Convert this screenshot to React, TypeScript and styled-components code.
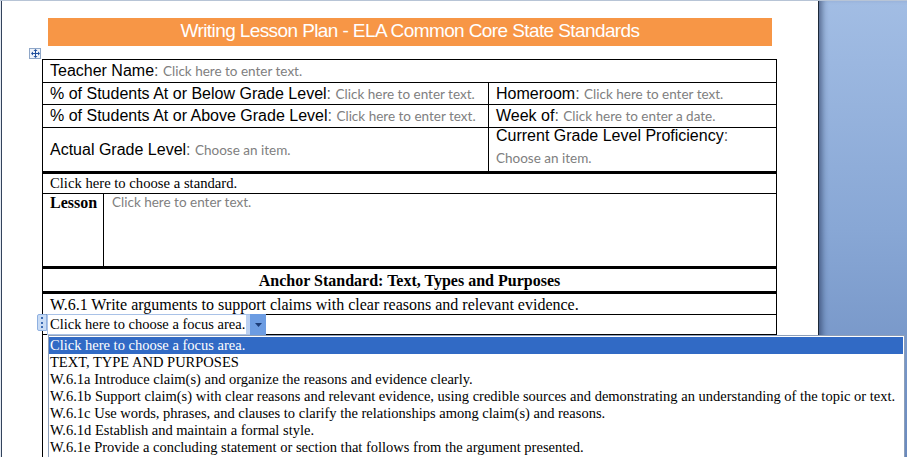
import React from "react";
import styled, { createGlobalStyle } from "styled-components";

const GlobalStyle = createGlobalStyle`
  * { box-sizing: border-box; }
  html, body { margin: 0; padding: 0; background: #fff; overflow: hidden; }
`;

const SANS = `"Liberation Sans", Arial, sans-serif`;
const SERIF = `"Liberation Serif", "Times New Roman", serif`;
const HINT = `Lato, "Noto Sans", sans-serif`;

const Window = styled.div`
  position: relative;
  display: flex;
  width: 907px;
  height: 457px;
  overflow: hidden;
  padding-left: 1px;
  border-top: 1px solid #b7c4d6;
  background: #e4eaf2;
`;

const Page = styled.div`
  width: 818px;
  flex: none;
  padding-top: 17px;
  background: #fff;
  border-left: 1px solid #33435c;
  border-right: 1px solid #1c2838;
`;

const Gutter = styled.div`
  flex: 1;
  background: linear-gradient(180deg, #a2bde4 0%, #88a7d5 50%, #6a8abe 100%);
  box-shadow: inset 7px 0 6px -4px rgba(20, 35, 70, 0.55);
`;

const Banner = styled.div`
  width: 724px;
  height: 28px;
  margin-left: 46px;
  padding-bottom: 2px;
  background: #f79646;
  color: #fff;
  font: 19px ${SANS};
  letter-spacing: -0.6px;
  line-height: 26px;
  text-align: center;
`;

const HandleRow = styled.div`
  height: 13px;
  padding: 2px 0 0 27px;
`;

const MoveHandle = styled.div`
  width: 12px;
  height: 11px;
  display: flex;
  align-items: center;
  justify-content: center;
  border: 1px solid #8fa7c8;
  background: #eef3fa;
`;

const Table = styled.div`
  width: 735px;
  margin-left: 40px;
  border: 1px solid #000;
  border-bottom: none;
`;

const Row = styled.div<{ $h: number; $rule?: number }>`
  display: flex;
  height: ${(p) => p.$h}px;
  border-bottom: ${(p) => p.$rule ?? 1}px solid #000;
`;

const Cell = styled.div<{
  $w?: number;
  $pad?: number;
  $align?: string;
  $justify?: string;
  $divider?: boolean;
}>`
  position: relative;
  display: flex;
  flex: ${(p) => (p.$w ? "none" : "1")};
  width: ${(p) => (p.$w ? `${p.$w}px` : "auto")};
  align-items: ${(p) => p.$align ?? "center"};
  justify-content: ${(p) => p.$justify ?? "flex-start"};
  padding-left: ${(p) => p.$pad ?? 7}px;
  border-right: ${(p) => (p.$divider ? "1px solid #000" : "none")};
  white-space: nowrap;
`;

const Stack = styled.div`
  display: flex;
  flex-direction: column;
`;

const Line = styled.div<{ $lh?: number; $shift?: number }>`
  line-height: ${(p) => (p.$lh ? `${p.$lh}px` : "normal")};
  margin-top: ${(p) => p.$shift ?? 0}px;
`;

const Label = styled.span`
  font: 16px ${SANS};
  color: #000;
`;

const Colon = styled.span`
  color: #595959;
`;

const Hint = styled.span<{ $lh?: number }>`
  font-family: ${HINT};
  font-size: 13.5px;
  color: #808080;
  line-height: ${(p) => (p.$lh ? `${p.$lh}px` : "normal")};
`;

const Serif = styled.span<{ $size: number; $bold?: boolean }>`
  font-family: ${SERIF};
  font-size: ${(p) => p.$size}px;
  font-weight: ${(p) => (p.$bold ? 700 : 400)};
  line-height: 17px;
  color: #000;
`;

const Control = styled.div`
  position: relative;
  display: flex;
  height: 21px;
  border: 1px solid #a9c2e7;
  border-right: none;
`;

const ControlText = styled.span`
  padding: 0 1px 0 2px;
  font: 14.5px ${SERIF};
  line-height: 19px;
  color: #000;
`;

const ControlEnd = styled.span`
  width: 4px;
  background: #bcd1f1;
`;

const ControlButton = styled.span`
  width: 16px;
  margin: -1px 0;
  display: flex;
  align-items: center;
  justify-content: center;
  background: #6c9ce2;
`;

const ControlGrip = styled.div`
  position: absolute;
  left: -11px;
  top: -1px;
  width: 10px;
  height: 17px;
  display: flex;
  align-items: center;
  justify-content: center;
  background: #c9dcf5;
  border: 1px solid #8fb0e0;
  border-radius: 2px 0 0 2px;

  &::after {
    content: "";
    height: 11px;
    border-left: 2px dotted #3b6bb3;
  }
`;

const Dropdown = styled.ul`
  position: absolute;
  left: 48px;
  top: 334px;
  width: 857px;
  height: 140px;
  margin: 0;
  padding: 1px 1px 0 0;
  list-style: none;
  overflow: hidden;
  background: #fff;
  border: 1px solid #8e9fb8;
  font: 14.5px ${SERIF};
`;

const Option = styled.li<{ $active?: boolean }>`
  height: 17px;
  line-height: 17px;
  padding-left: 1px;
  white-space: nowrap;
  background: ${(p) => (p.$active ? "#316ac5" : "transparent")};
  color: ${(p) => (p.$active ? "#fff" : "#000")};
`;

const MoveIcon = () => (
  <svg width="9" height="9" viewBox="0 0 9 9">
    <g stroke="#1f4e9c" strokeWidth="1" fill="none">
      <path d="M4.5 1.5v6M1.5 4.5h6" />
    </g>
    <g fill="#1f4e9c">
      <path d="M4.5 0L6.5 2H2.5z" />
      <path d="M4.5 9L6.5 7H2.5z" />
      <path d="M0 4.5L2 2.5V6.5z" />
      <path d="M9 4.5L7 2.5V6.5z" />
    </g>
  </svg>
);

const ArrowDown = () => (
  <svg width="7" height="4" viewBox="0 0 7 4">
    <path d="M0 0h7L3.5 4z" fill="#1c3d78" />
  </svg>
);

const Field = ({ label, hint }: { label: string; hint: string }) => (
  <Line>
    <Label>
      {label}
      <Colon>:</Colon>{" "}
    </Label>
    <Hint>{hint}</Hint>
  </Line>
);

const focusAreas = [
  "Click here to choose a focus area.",
  "TEXT, TYPE AND PURPOSES",
  "W.6.1a Introduce claim(s) and organize the reasons and evidence clearly.",
  "W.6.1b Support claim(s) with clear reasons and relevant evidence, using credible sources and demonstrating an understanding of the topic or text.",
  "W.6.1c Use words, phrases, and clauses to clarify the relationships among claim(s) and reasons.",
  "W.6.1d Establish and maintain a formal style.",
  "W.6.1e Provide a concluding statement or section that follows from the argument presented.",
];

export default function App() {
  return (
    <>
      <GlobalStyle />
      <Window>
        <Page>
          <Banner>Writing Lesson Plan - ELA Common Core State Standards</Banner>
          <HandleRow>
            <MoveHandle>
              <MoveIcon />
            </MoveHandle>
          </HandleRow>
          <Table>
            <Row $h={23}>
              <Cell>
                <Field label="Teacher Name" hint="Click here to enter text." />
              </Cell>
            </Row>
            <Row $h={22}>
              <Cell $w={446} $divider>
                <Field label="% of Students At or Below Grade Level" hint="Click here to enter text." />
              </Cell>
              <Cell>
                <Field label="Homeroom" hint="Click here to enter text." />
              </Cell>
            </Row>
            <Row $h={23}>
              <Cell $w={446} $divider>
                <Field label="% of Students At or Above Grade Level" hint="Click here to enter text." />
              </Cell>
              <Cell>
                <Field label="Week of" hint="Click here to enter a date." />
              </Cell>
            </Row>
            <Row $h={46} $rule={3}>
              <Cell $w={446} $divider>
                <Field label="Actual Grade Level" hint="Choose an item." />
              </Cell>
              <Cell $align="flex-start">
                <Stack>
                  <Line $lh={18} $shift={-1}>
                    <Label>
                      Current Grade Level Proficiency<Colon>:</Colon>
                    </Label>
                  </Line>
                  <Line $lh={26}>
                    <Hint>Choose an item.</Hint>
                  </Line>
                </Stack>
              </Cell>
            </Row>
            <Row $h={20}>
              <Cell>
                <Serif $size={14.67}>Click here to choose a standard.</Serif>
              </Cell>
            </Row>
            <Row $h={75} $rule={3}>
              <Cell $w={61} $divider $align="flex-start">
                <Serif $size={16} $bold>
                  Lesson
                </Serif>
              </Cell>
              <Cell $pad={8} $align="flex-start">
                <Hint $lh={17}>Click here to enter text.</Hint>
              </Cell>
            </Row>
            <Row $h={25} $rule={3}>
              <Cell $pad={0} $justify="center">
                <Serif $size={16} $bold>
                  Anchor Standard: Text, Types and Purposes
                </Serif>
              </Cell>
            </Row>
            <Row $h={21}>
              <Cell>
                <Serif $size={16}>
                  W.6.1 Write arguments to support claims with clear reasons and relevant evidence.
                </Serif>
              </Cell>
            </Row>
            <Row $h={20}>
              <Cell $pad={4}>
                <Control>
                  <ControlGrip />
                  <ControlText>Click here to choose a focus area.</ControlText>
                  <ControlEnd />
                  <ControlButton>
                    <ArrowDown />
                  </ControlButton>
                </Control>
              </Cell>
            </Row>
            <Row $h={140} $rule={0} />
          </Table>
        </Page>
        <Gutter />
        <Dropdown>
          {focusAreas.map((item, i) => (
            <Option key={item} $active={i === 0}>
              {item}
            </Option>
          ))}
        </Dropdown>
      </Window>
    </>
  );
}
